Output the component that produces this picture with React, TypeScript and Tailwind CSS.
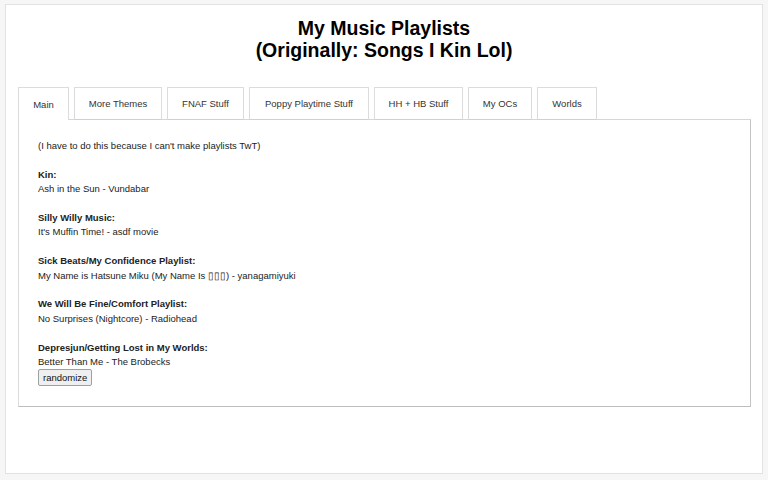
import React from "react";

const tabs: { label: string; w: string; active?: boolean }[] = [
  { label: "Main", w: "w-[51px]", active: true },
  { label: "More Themes", w: "w-[88px]" },
  { label: "FNAF Stuff", w: "w-[77px]" },
  { label: "Poppy Playtime Stuff", w: "w-[120px]" },
  { label: "HH + HB Stuff", w: "w-[89px]" },
  { label: "My OCs", w: "w-[64px]" },
  { label: "Worlds", w: "w-[60px]" },
];

const groups: { title: string; song: string }[] = [
  { title: "Kin:", song: "Ash in the Sun - Vundabar" },
  { title: "Silly Willy Music:", song: "It's Muffin Time! - asdf movie" },
  {
    title: "Sick Beats/My Confidence Playlist:",
    song: "My Name is Hatsune Miku (My Name Is \u25AF\u25AF\u25AF) - yanagamiyuki",
  },
  { title: "We Will Be Fine/Comfort Playlist:", song: "No Surprises (Nightcore) - Radiohead" },
  { title: "Depresjun/Getting Lost in My Worlds:", song: "Better Than Me - The Brobecks" },
];

export default function App() {
  return (
    <div
      className="w-[768px] h-[480px] bg-[#f6f6f6] pt-[4px] pl-[5px] overflow-hidden"
      style={{ fontFamily: '"Liberation Sans", Arial, sans-serif' }}
    >
      <div className="w-[758px] h-[470px] bg-white border border-[#e2e2e2] px-[12px] pt-[12px]">
        <h1 className="text-center font-bold text-[19.5px] leading-[22px] text-black">
          My Music Playlists
          <br />
          (Originally: Songs I Kin Lol)
        </h1>

        <div className="mt-[26px]">
          <div className="relative z-10 -mb-px flex gap-[5px]">
            {tabs.map((t) => (
              <div
                key={t.label}
                className={
                  t.active
                    ? `${t.w} h-[33px] flex items-center justify-center border border-b-0 border-[#dcdcdc] bg-white text-[9.5px] text-[#333] pt-[2px]`
                    : `${t.w} h-[33px] flex items-center justify-center border border-[#dcdcdc] border-b-[#d0d0d0] bg-white text-[9.5px] text-[#333] pt-px`
                }
              >
                {t.label}
              </div>
            ))}
          </div>
          <div className="w-[733px] border-t border-l border-t-[#d6d6d6] border-l-[#dcdcdc] border-r border-b border-r-[#c4c4c4] border-b-[#bdbdbd] px-[19px] pt-[19px] pb-[20px] text-[9.5px] leading-[14.4px] text-[#222]">
            <div>(I have to do this because I can't make playlists TwT)</div>
            {groups.map((g) => (
              <div key={g.title} className="mt-[14.4px]">
                <div className="font-bold">{g.title}</div>
                <div>{g.song}</div>
              </div>
            ))}
            <button className="block h-[17px] px-[4px] border border-[#a0a0a0] bg-[#efefef] rounded-[2px] text-[9.5px] leading-[13px] text-[#111]">
              randomize
            </button>
          </div>
        </div>
      </div>
    </div>
  );
}
